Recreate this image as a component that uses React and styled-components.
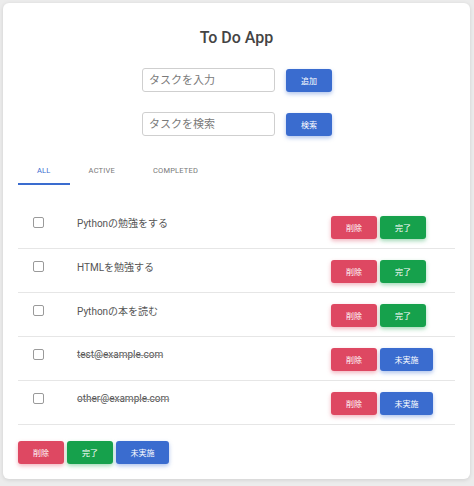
import React from "react";
import styled, { createGlobalStyle } from "styled-components";

const GlobalStyle = createGlobalStyle`
  body {
    margin: 0;
    background: #ececec;
    font-family: Roboto, "Noto Sans CJK JP", sans-serif;
  }
`;

const colors = {
  red: "#de4862",
  green: "#16a14c",
  blue: "#3a6ccf",
};

const todos = [
  { id: 1, text: "Pythonの勉強をする", done: false },
  { id: 2, text: "HTMLを勉強する", done: false },
  { id: 3, text: "Pythonの本を読む", done: false },
  { id: 4, text: "test@example.com", done: true },
  { id: 5, text: "other@example.com", done: true },
];

const App = () => {
  return (
    <>
      <GlobalStyle />
      <Page>
        <Card>
          <Title>To Do App</Title>
          <FormRow>
            <Input placeholder="タスクを入力" />
            <Button color={colors.blue}>追加</Button>
          </FormRow>
          <FormRow>
            <Input placeholder="タスクを検索" />
            <Button color={colors.blue}>検索</Button>
          </FormRow>
          <Tabs>
            <Tab active>ALL</Tab>
            <Tab>ACTIVE</Tab>
            <Tab>COMPLETED</Tab>
          </Tabs>
          <List>
            {todos.map((t) => (
              <Row key={t.id}>
                <Check />
                <TodoText done={t.done}>{t.text}</TodoText>
                <Actions>
                  <Button color={colors.red}>削除</Button>
                  {t.done ? (
                    <Button color={colors.blue} wide>
                      未実施
                    </Button>
                  ) : (
                    <Button color={colors.green}>完了</Button>
                  )}
                </Actions>
              </Row>
            ))}
          </List>
          <Footer>
            <Button color={colors.red}>削除</Button>
            <Button color={colors.green}>完了</Button>
            <Button color={colors.blue} wide>
              未実施
            </Button>
          </Footer>
        </Card>
      </Page>
    </>
  );
};

const Page = styled.div`
  padding: 3px 4px 8px 3px;
`;

const Card = styled.div`
  background: #fff;
  border-radius: 6px;
  box-shadow: 0 1px 4px rgba(0, 0, 0, 0.12);
  padding: 25px 15px 15px;
  display: flex;
  flex-direction: column;
`;

const Title = styled.h1`
  margin: 0 0 20px;
  text-align: center;
  font-size: 16px;
  line-height: 20px;
  font-weight: 500;
  color: #444;
`;

const FormRow = styled.div`
  display: flex;
  justify-content: center;
  align-items: center;
  gap: 11px;
  margin-bottom: 20px;
  padding-left: 1px;
`;

const Input = styled.input`
  box-sizing: border-box;
  width: 133px;
  height: 24px;
  border: 1px solid #cfcfcf;
  border-radius: 3px;
  padding: 0 6px;
  font-family: Roboto, "Noto Sans CJK JP", sans-serif;
  font-size: 11px;
  color: #333;
  &::placeholder {
    color: #7a7a7a;
  }
`;

const Button = styled.button`
  box-sizing: border-box;
  height: 23px;
  min-width: ${(p) => (p.wide ? "53px" : "46px")};
  padding: 0 8px;
  border: none;
  border-radius: 3px;
  background: ${(p) => p.color};
  color: #fff;
  font-family: Roboto, "Noto Sans CJK JP", sans-serif;
  font-size: 8px;
  box-shadow: 0 2px 4px ${(p) => p.color}66;
`;

const Tabs = styled.div`
  display: flex;
  margin-top: 1px;
  margin-bottom: 20px;
`;

const Tab = styled.div`
  height: 28px;
  box-sizing: border-box;
  padding: 0 19px;
  display: flex;
  align-items: center;
  font-size: 7.5px;
  letter-spacing: 0.2px;
  color: ${(p) => (p.active ? "#3a6ccf" : "#777")};
  border-bottom: 2px solid ${(p) => (p.active ? "#3a6ccf" : "transparent")};
`;

const List = styled.div`
  display: flex;
  flex-direction: column;
`;

const Row = styled.div`
  box-sizing: border-box;
  display: grid;
  grid-template-columns: 59px 1fr 124px;
  align-items: center;
  height: 44px;
  border-bottom: 1px solid #e6e6e6;
`;

const Check = styled.span`
  box-sizing: border-box;
  width: 11px;
  height: 11px;
  margin-left: 15px;
  margin-bottom: 8px;
  border: 1.5px solid #9a9a9a;
  border-radius: 2px;
`;

const TodoText = styled.span`
  margin-bottom: 8px;
  font-size: 10px;
  color: #555;
  text-decoration: ${(p) => (p.done ? "line-through" : "none")};
  text-decoration-color: #999;
`;

const Actions = styled.div`
  display: flex;
  gap: 3px;
  padding-top: 1px;
`;

const Footer = styled.div`
  display: flex;
  gap: 3px;
  margin-top: 16px;
`;

export default App;
